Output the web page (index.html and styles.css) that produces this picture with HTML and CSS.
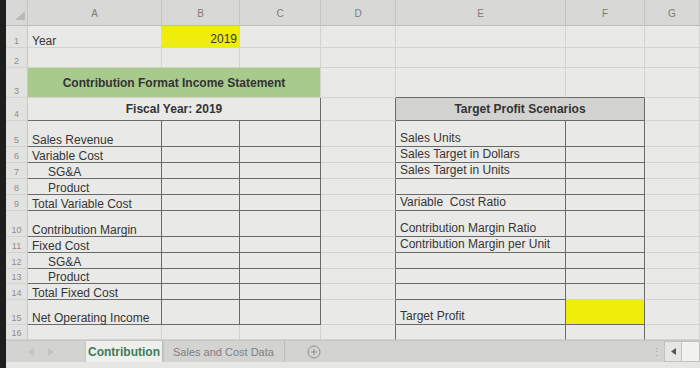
FILE: index.html
```html
<!DOCTYPE html>
<html lang="en">
<head>
    <meta charset="UTF-8">
    <meta name="viewport" content="width=device-width, initial-scale=1.0">
    <title>Contribution</title>
    <link rel="stylesheet" href="styles.css">
</head>
<body>
    <div class="screen">
        <div class="bezel"></div>
        <div class="workbook">
            <table class="sheet">
                <colgroup>
                    <col class="c-head">
                    <col class="c-a">
                    <col class="c-b">
                    <col class="c-c">
                    <col class="c-d">
                    <col class="c-e">
                    <col class="c-f">
                    <col class="c-g">
                </colgroup>
                <tr class="h-col">
                    <th class="corner"><svg width="10" height="9" viewBox="0 0 10 9"><polygon points="10,0 10,9 0,9" fill="#b9b9b7"/></svg></th>
                    <th>A</th><th>B</th><th>C</th><th>D</th><th>E</th><th>F</th><th>G</th>
                </tr>
                <tr class="h-22">
                    <td class="num">1</td>
                    <td class="txt">Year</td>
                    <td class="txt yellow right">2019</td>
                    <td></td><td></td><td></td><td></td><td></td>
                </tr>
                <tr class="h-20">
                    <td class="num">2</td>
                    <td></td><td></td><td></td><td></td><td></td><td></td><td></td>
                </tr>
                <tr class="h-30">
                    <td class="num">3</td>
                    <td class="title green" colspan="3">Contribution Format Income Statement</td>
                    <td></td>
                    <td class="dk-b"></td>
                    <td class="dk-b"></td>
                    <td></td>
                </tr>
                <tr class="h-23">
                    <td class="num">4</td>
                    <td class="title dk-r dk-b" colspan="3">Fiscal Year: 2019</td>
                    <td class="dk-r"></td>
                    <td class="title grey dk-r dk-b" colspan="2">Target Profit Scenarios</td>
                    <td></td>
                </tr>
                <tr class="h-26">
                    <td class="num">5</td>
                    <td class="txt dk-r dk-b">Sales Revenue</td>
                    <td class="dk-r dk-b"></td>
                    <td class="dk-r dk-b"></td>
                    <td class="dk-r"></td>
                    <td class="txt up dk-r dk-b">Sales Units</td>
                    <td class="dk-r dk-b"></td>
                    <td></td>
                </tr>
                <tr class="h-16">
                    <td class="num">6</td>
                    <td class="txt dk-r dk-b">Variable Cost</td>
                    <td class="dk-r dk-b"></td>
                    <td class="dk-r dk-b"></td>
                    <td class="dk-r"></td>
                    <td class="txt up dk-r dk-b">Sales Target in Dollars</td>
                    <td class="dk-r dk-b"></td>
                    <td></td>
                </tr>
                <tr class="h-16">
                    <td class="num">7</td>
                    <td class="txt indent dk-r dk-b">SG&amp;A</td>
                    <td class="dk-r dk-b"></td>
                    <td class="dk-r dk-b"></td>
                    <td class="dk-r"></td>
                    <td class="txt up dk-r dk-b">Sales Target in Units</td>
                    <td class="dk-r dk-b"></td>
                    <td></td>
                </tr>
                <tr class="h-16">
                    <td class="num">8</td>
                    <td class="txt indent dk-r dk-b">Product</td>
                    <td class="dk-r dk-b"></td>
                    <td class="dk-r dk-b"></td>
                    <td class="dk-r"></td>
                    <td class="dk-r dk-b"></td>
                    <td class="dk-r dk-b"></td>
                    <td></td>
                </tr>
                <tr class="h-16">
                    <td class="num">9</td>
                    <td class="txt dk-r dk-b">Total Variable Cost</td>
                    <td class="dk-r dk-b"></td>
                    <td class="dk-r dk-b"></td>
                    <td class="dk-r"></td>
                    <td class="txt up dk-r dk-b">Variable&nbsp; Cost Ratio</td>
                    <td class="dk-r dk-b"></td>
                    <td></td>
                </tr>
                <tr class="h-26">
                    <td class="num">10</td>
                    <td class="txt dk-r dk-b">Contribution Margin</td>
                    <td class="dk-r dk-b"></td>
                    <td class="dk-r dk-b"></td>
                    <td class="dk-r"></td>
                    <td class="txt up dk-r dk-b">Contribution Margin Ratio</td>
                    <td class="dk-r dk-b"></td>
                    <td></td>
                </tr>
                <tr class="h-16">
                    <td class="num">11</td>
                    <td class="txt dk-r dk-b">Fixed Cost</td>
                    <td class="dk-r dk-b"></td>
                    <td class="dk-r dk-b"></td>
                    <td class="dk-r"></td>
                    <td class="txt up dk-r dk-b">Contribution Margin per Unit</td>
                    <td class="dk-r dk-b"></td>
                    <td></td>
                </tr>
                <tr class="h-16">
                    <td class="num">12</td>
                    <td class="txt indent dk-r dk-b">SG&amp;A</td>
                    <td class="dk-r dk-b"></td>
                    <td class="dk-r dk-b"></td>
                    <td class="dk-r"></td>
                    <td class="dk-r dk-b"></td>
                    <td class="dk-r dk-b"></td>
                    <td></td>
                </tr>
                <tr class="h-15">
                    <td class="num">13</td>
                    <td class="txt indent dk-r dk-b">Product</td>
                    <td class="dk-r dk-b"></td>
                    <td class="dk-r dk-b"></td>
                    <td class="dk-r"></td>
                    <td class="dk-r dk-b"></td>
                    <td class="dk-r dk-b"></td>
                    <td></td>
                </tr>
                <tr class="h-16">
                    <td class="num">14</td>
                    <td class="txt dk-r dk-b">Total Fixed Cost</td>
                    <td class="dk-r dk-b"></td>
                    <td class="dk-r dk-b"></td>
                    <td class="dk-r"></td>
                    <td class="dk-r dk-b"></td>
                    <td class="dk-r"></td>
                    <td></td>
                </tr>
                <tr class="h-25">
                    <td class="num">15</td>
                    <td class="txt dk-r dk-b">Net Operating Income</td>
                    <td class="dk-r dk-b"></td>
                    <td class="dk-r dk-b"></td>
                    <td class="dk-r"></td>
                    <td class="txt up dk-r dk-b">Target Profit</td>
                    <td class="yellow dk-r dk-b"></td>
                    <td></td>
                </tr>
                <tr class="h-15">
                    <td class="num">16</td>
                    <td></td>
                    <td></td>
                    <td></td>
                    <td class="dk-r"></td>
                    <td class="dk-r"></td>
                    <td class="dk-r"></td>
                    <td></td>
                </tr>
            </table>

            <div class="tabbar">
                <div class="tab-nav">
                    <svg width="6" height="8" viewBox="0 0 6 8"><polygon points="6,0 6,8 0,4" fill="#c4c4c2"/></svg>
                    <svg width="6" height="8" viewBox="0 0 6 8"><polygon points="0,0 0,8 6,4" fill="#c4c4c2"/></svg>
                </div>
                <div class="tab active">Contribution</div>
                <div class="tab">Sales and Cost Data</div>
                <div class="tab-add">
                    <svg width="14" height="14" viewBox="0 0 14 14">
                        <circle cx="7" cy="7" r="6" fill="none" stroke="#8d8d8b" stroke-width="1"/>
                        <path d="M7 4v6M4 7h6" stroke="#8d8d8b" stroke-width="1"/>
                    </svg>
                </div>
                <div class="tab-fill"></div>
                <div class="tab-dots">&#8942;</div>
                <div class="scroll-btn">
                    <svg width="5" height="7" viewBox="0 0 5 7"><polygon points="5,0 5,7 0,3.5" fill="#555"/></svg>
                </div>
                <div class="scroll-track"></div>
            </div>
            <div class="statusbar"></div>
        </div>
    </div>
</body>
</html>
```

FILE: styles.css
```css
* {
    box-sizing: border-box;
}

body {
    margin: 0;
    background-color: #e4e4e2;
    font-family: "Liberation Sans", Arial, sans-serif;
    color: #353535;
}

.screen {
    display: flex;
    height: 368px;
    overflow: hidden;
}

.bezel {
    width: 6px;
    flex-shrink: 0;
    background-color: #1e1e1e;
}

.workbook {
    flex: 1;
    display: flex;
    flex-direction: column;
}

/* sheet grid */
.sheet {
    table-layout: fixed;
    width: 694px;
    border-collapse: separate;
    border-spacing: 0;
    background-color: #e9e9e7;
}

.c-head { width: 22px; }
.c-a { width: 134px; }
.c-b { width: 78px; }
.c-c { width: 81px; }
.c-d { width: 75px; }
.c-e { width: 170px; }
.c-f { width: 79px; }
.c-g { width: 55px; }

.sheet td,
.sheet th {
    padding: 0;
    border-right: 1px solid #d3d3d1;
    border-bottom: 1px solid #d3d3d1;
    font-size: 12px;
    line-height: 14px;
    white-space: nowrap;
    vertical-align: bottom;
}

.sheet th {
    background-color: #d8d8d6;
    border-right-color: #c4c4c2;
    border-bottom-color: #bdbdbb;
    font-weight: normal;
    font-size: 10px;
    color: #7c7c7a;
    vertical-align: middle;
    padding-top: 3px;
}

.sheet th.corner {
    text-align: right;
    vertical-align: bottom;
    padding: 0 2px 1px 0;
}

.h-col { height: 26px; }
.h-15 { height: 15px; }
.h-16 { height: 16px; }
.h-20 { height: 20px; }
.h-22 { height: 22px; }
.h-23 { height: 23px; }
.h-25 { height: 25px; }
.h-26 { height: 26px; }
.h-30 { height: 30px; }

.sheet td.num {
    font-size: 9px;
    line-height: 9px;
    color: #8e8e8c;
    text-align: center;
    border-right-color: #c8c8c6;
    background-color: #e2e2e0;
    padding-bottom: 1px;
}

.sheet td.txt {
    padding-left: 4px;
    line-height: 9px;
    padding-bottom: 1px;
}

.sheet td.indent {
    padding-left: 20px;
}

/* labels on the right side sit a little higher in the shot */
.sheet td.up {
    line-height: 12px;
    padding-bottom: 2px;
}

.sheet td.right {
    text-align: right;
    padding-right: 2px;
    padding-bottom: 3px;
}

.sheet td.title {
    font-weight: bold;
    text-align: center;
    vertical-align: middle;
    color: #333;
}

.green {
    background-color: #a8ca8c;
}

.grey {
    background-color: #d2d2d0;
}

.yellow {
    background-color: #eeee0a;
}

.sheet .dk-r {
    border-right-color: #6a6a68;
}

.sheet .dk-b {
    border-bottom-color: #6a6a68;
}

/* sheet tabs */
.tabbar {
    display: flex;
    align-items: stretch;
    height: 22px;
    flex-shrink: 0;
    background-color: #d3d3d1;
    border-top: 1px solid #c6c6c4;
}

.tab-nav {
    width: 80px;
    display: flex;
    align-items: center;
    justify-content: center;
    gap: 14px;
    padding-right: 10px;
}

.tab {
    display: flex;
    align-items: center;
    padding: 0 10px;
    font-size: 11px;
    color: #808080;
    border-right: 1px solid #bdbdbb;
}

.tab.active {
    width: 77px;
    justify-content: center;
    background-color: #eef0ee;
    font-weight: bold;
    font-size: 12px;
    color: #3f7c58;
    box-shadow: 0 1px 2px rgba(0, 0, 0, 0.2);
}

.tab-add {
    width: 58px;
    display: flex;
    align-items: center;
    justify-content: center;
}

.tab-fill {
    flex: 1;
}

.tab-dots {
    width: 16px;
    font-size: 11px;
    line-height: 22px;
    color: #a0a09e;
    text-align: center;
}

.scroll-btn {
    width: 18px;
    display: flex;
    align-items: center;
    justify-content: center;
    background-color: #e6e6e4;
    border: 1px solid #c2c2c0;
}

.scroll-track {
    width: 18px;
    background-color: #f1f1ef;
    border: 1px solid #c2c2c0;
    border-left: none;
}

.statusbar {
    flex: 1;
    background-color: #e6e6e4;
}
```
